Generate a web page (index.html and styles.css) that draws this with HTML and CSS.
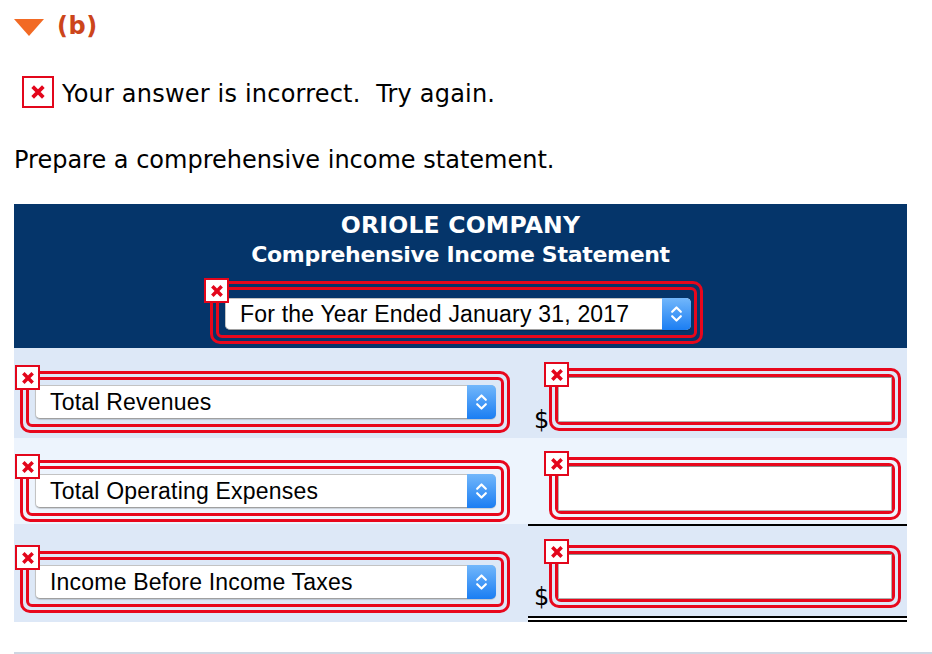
FILE: index.html
```html
<!DOCTYPE html>
<html>
<head>
<meta charset="utf-8">
<link rel="stylesheet" href="styles.css">
</head>
<body>
<div class="page">
  <div class="part-head">
    <span class="tri"></span>
    <span class="part-label">(b)</span>
  </div>

  <div class="feedback">
    <span class="xbox xbox-lg"><svg viewBox="0 0 12 12" width="16" height="16"><path d="M2 2L10 10M10 2L2 10" stroke="#e3061b" stroke-width="2.8" fill="none"/></svg></span>
    <span class="feedback-text">Your answer is incorrect.&nbsp; Try again.</span>
  </div>

  <p class="prompt">Prepare a comprehensive income statement.</p>

  <div class="stmt">
    <div class="stmt-head">
      <div class="head-line head-co">ORIOLE COMPANY</div>
      <div class="head-line">Comprehensive Income Statement</div>
      <div class="ring ring-date">
        <span class="xbox xbox-date"><svg viewBox="0 0 12 12" width="14" height="14"><path d="M2 2L10 10M10 2L2 10" stroke="#e3061b" stroke-width="3" fill="none"/></svg></span>
        <div class="ring-in ring-in-date">
          <div class="sel sel-date">
            <span class="sel-text">For the Year Ended January 31, 2017</span>
            <span class="sel-btn"><svg viewBox="0 0 12 22" width="13" height="24"><path d="M2 9L6 5L10 9M2 13L6 17L10 13" stroke="#fff" stroke-width="2" fill="none" stroke-linecap="round" stroke-linejoin="round"/></svg></span>
          </div>
        </div>
      </div>
    </div>

    <div class="row row-1">
      <div class="cell-l">
        <div class="ring ring-sel">
          <span class="xbox"><svg viewBox="0 0 12 12" width="14" height="14"><path d="M2 2L10 10M10 2L2 10" stroke="#e3061b" stroke-width="3" fill="none"/></svg></span>
          <div class="ring-in ring-in-sel">
            <div class="sel">
              <span class="sel-text">Total Revenues</span>
              <span class="sel-btn"><svg viewBox="0 0 12 22" width="13" height="24"><path d="M2 9L6 5L10 9M2 13L6 17L10 13" stroke="#fff" stroke-width="2" fill="none" stroke-linecap="round" stroke-linejoin="round"/></svg></span>
            </div>
          </div>
        </div>
      </div>
      <div class="cell-r">
        <span class="dollar">$</span>
        <div class="ring ring-inp">
          <span class="xbox"><svg viewBox="0 0 12 12" width="14" height="14"><path d="M2 2L10 10M10 2L2 10" stroke="#e3061b" stroke-width="3" fill="none"/></svg></span>
          <div class="ring-in ring-in-inp"><div class="inp"></div></div>
        </div>
      </div>
    </div>

    <div class="row row-2">
      <div class="cell-l">
        <div class="ring ring-sel">
          <span class="xbox"><svg viewBox="0 0 12 12" width="14" height="14"><path d="M2 2L10 10M10 2L2 10" stroke="#e3061b" stroke-width="3" fill="none"/></svg></span>
          <div class="ring-in ring-in-sel">
            <div class="sel">
              <span class="sel-text">Total Operating Expenses</span>
              <span class="sel-btn"><svg viewBox="0 0 12 22" width="13" height="24"><path d="M2 9L6 5L10 9M2 13L6 17L10 13" stroke="#fff" stroke-width="2" fill="none" stroke-linecap="round" stroke-linejoin="round"/></svg></span>
            </div>
          </div>
        </div>
      </div>
      <div class="cell-r">
        <span class="dollar dollar-blank">$</span>
        <div class="ring ring-inp">
          <span class="xbox"><svg viewBox="0 0 12 12" width="14" height="14"><path d="M2 2L10 10M10 2L2 10" stroke="#e3061b" stroke-width="3" fill="none"/></svg></span>
          <div class="ring-in ring-in-inp"><div class="inp"></div></div>
        </div>
      </div>
    </div>

    <div class="row row-3">
      <div class="cell-l">
        <div class="ring ring-sel">
          <span class="xbox"><svg viewBox="0 0 12 12" width="14" height="14"><path d="M2 2L10 10M10 2L2 10" stroke="#e3061b" stroke-width="3" fill="none"/></svg></span>
          <div class="ring-in ring-in-sel">
            <div class="sel">
              <span class="sel-text">Income Before Income Taxes</span>
              <span class="sel-btn"><svg viewBox="0 0 12 22" width="13" height="24"><path d="M2 9L6 5L10 9M2 13L6 17L10 13" stroke="#fff" stroke-width="2" fill="none" stroke-linecap="round" stroke-linejoin="round"/></svg></span>
            </div>
          </div>
        </div>
      </div>
      <div class="cell-r">
        <span class="dollar">$</span>
        <div class="ring ring-inp">
          <span class="xbox"><svg viewBox="0 0 12 12" width="14" height="14"><path d="M2 2L10 10M10 2L2 10" stroke="#e3061b" stroke-width="3" fill="none"/></svg></span>
          <div class="ring-in ring-in-inp"><div class="inp"></div></div>
        </div>
      </div>
    </div>
  </div>

  <div class="sep"></div>
</div>
</body>
</html>
```

FILE: styles.css
```css
html, body {
  margin: 0;
  padding: 0;
  background: #fff;
}

.page {
  font-family: "DejaVu Sans", Verdana, sans-serif;
  color: #000;
  width: 932px;
  height: 654px;
  overflow: hidden;
}

.part-head {
  display: flex;
  align-items: center;
  gap: 13px;
  margin: 12px 0 0 14px;
  height: 28px;
}

.tri {
  width: 0;
  height: 0;
  border-left: 15px solid transparent;
  border-right: 15px solid transparent;
  border-top: 17px solid #f26a24;
  margin-top: 3px;
}

.part-label {
  font-weight: bold;
  font-size: 24px;
  line-height: 28px;
  letter-spacing: 0.6px;
  color: #cc451b;
}

.feedback {
  display: flex;
  align-items: center;
  gap: 8px;
  margin: 36px 0 0 22px;
  height: 32px;
}

.feedback-text {
  font-size: 24px;
  line-height: 28px;
  letter-spacing: 0.2px;
  padding-top: 4px;
}

.prompt {
  margin: 38px 0 0 14px;
  font-size: 24px;
  line-height: 28px;
}

.stmt {
  margin: 30px 0 0 14px;
  width: 893px;
}

.stmt-head {
  background: #05356a;
  color: #fff;
  height: 144px;
  box-sizing: border-box;
  padding-top: 6px;
  display: flex;
  flex-direction: column;
  align-items: center;
}

.head-line {
  font-weight: bold;
  font-size: 22px;
  line-height: 30px;
  letter-spacing: -0.3px;
}

.head-co {
  font-size: 23.5px;
  letter-spacing: 0.2px;
}

.xbox {
  display: flex;
  align-items: center;
  justify-content: center;
  box-sizing: border-box;
  width: 25px;
  height: 25px;
  border: 2px solid #e3061b;
  background: #fff;
}

.xbox-lg {
  width: 32px;
  height: 32px;
}

.ring .xbox {
  position: absolute;
  left: -8px;
  top: -9px;
}

.ring .xbox-date {
  left: -9px;
  top: -6px;
}

.ring {
  position: relative;
  border: 3px solid #e8071c;
  border-radius: 10px;
  padding: 3px;
}

.ring-in {
  border: 3px solid #e8071c;
  border-radius: 6px;
}

.ring-date {
  margin-top: 11px;
  margin-left: -8px;
}

.ring-in-date {
  padding: 8px 3px 5px 6px;
}

.ring-in-sel {
  padding: 5px 5px 5px 6px;
}

.ring-in-inp {
  padding: 0;
}

.sel {
  display: flex;
  align-items: stretch;
  width: 461px;
  height: 34px;
  box-sizing: border-box;
  background: #fff;
  color: #000;
  border: 1px solid #c3c3c3;
  border-bottom-color: #a0a0a0;
  border-radius: 5px;
  box-shadow: 0 1px 1px rgba(0, 0, 0, 0.15);
  font-family: "Liberation Sans", Arial, sans-serif;
  font-size: 23px;
  letter-spacing: 0.2px;
}

.sel-date {
  width: 466px;
  height: 32px;
}

.sel-text {
  flex: 1;
  display: flex;
  align-items: center;
  padding-left: 14px;
  white-space: nowrap;
}

.sel-btn {
  width: 29px;
  margin: -1px -1px -1px 0;
  border-radius: 0 5px 5px 0;
  background: linear-gradient(#72b7fb, #1b7ef3);
  display: flex;
  align-items: center;
  justify-content: center;
}

.row {
  display: flex;
}

.cell-l {
  width: 514px;
  box-sizing: border-box;
  padding-left: 6px;
  display: flex;
  align-items: flex-end;
}

.cell-r {
  width: 379px;
  box-sizing: border-box;
  padding-left: 6px;
  display: flex;
  align-items: flex-end;
  gap: 0;
  background-clip: padding-box;
}

.row-1 { height: 90px; }
.row-2 { height: 86px; }
.row-3 { height: 98px; }

.row-1 .cell-l, .row-1 .cell-r,
.row-3 .cell-l, .row-3 .cell-r {
  background-color: #dde8f7;
}

.row-2 .cell-l, .row-2 .cell-r {
  background-color: #edf4fd;
}

.row-1 .cell-l { padding-bottom: 5px; }
.row-1 .cell-r { padding-bottom: 7px; }
.row-2 .cell-l { padding-bottom: 2px; }
.row-2 .cell-r { padding-bottom: 4px; }
.row-3 .cell-l { padding-bottom: 9px; }
.row-3 .cell-r {
  padding-bottom: 8px;
  border-top: 2px solid #000;
  border-bottom: 6px double #000;
}

.dollar {
  font-family: "DejaVu Sans", Verdana, sans-serif;
  font-size: 24px;
  line-height: 22px;
  width: 15px;
}

.dollar-blank {
  visibility: hidden;
}

.inp {
  width: 334px;
  height: 45px;
  box-sizing: border-box;
  background: #fff;
  border: 1px solid #b0b0b0;
  border-top-color: #8f8f8f;
}

.sep {
  margin: 30px 0 0 14px;
  height: 2px;
  background: #cfd7e3;
}
```
